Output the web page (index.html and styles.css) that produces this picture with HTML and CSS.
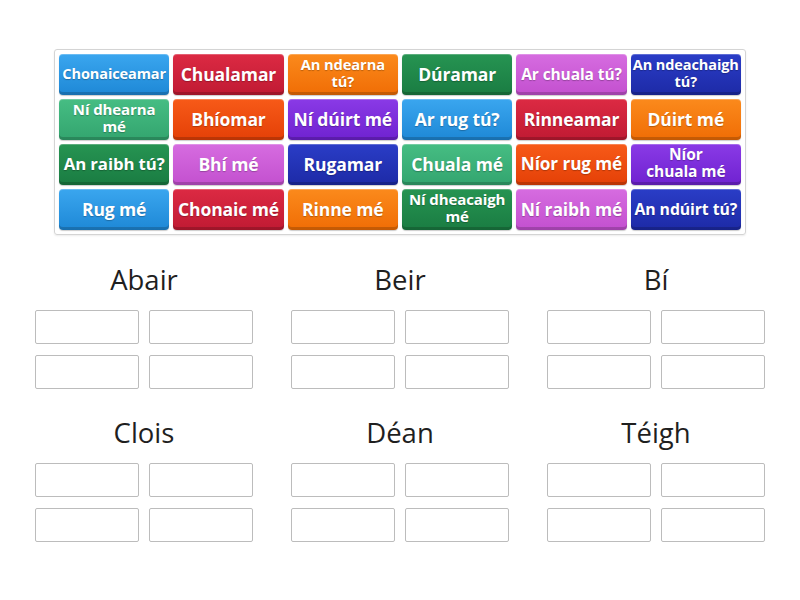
FILE: index.html
```html
<!DOCTYPE html>
<html lang="ga">
<head>
<meta charset="utf-8">
<title>Group sort</title>
<link rel="stylesheet" href="styles.css">
</head>
<body>
<div class="page">
  <div class="bank">
    <div class="tile blue fs-145">Chonaiceamar</div>
    <div class="tile red">Chualamar</div>
    <div class="tile orange fs-147 two">An ndearna<br>tú?</div>
    <div class="tile dgreen">Dúramar</div>
    <div class="tile pink fs-155">Ar chuala tú?</div>
    <div class="tile navy fs-145 two">An ndeachaigh<br>tú?</div>

    <div class="tile lgreen fs-15 two">Ní dhearna<br>mé</div>
    <div class="tile ored">Bhíomar</div>
    <div class="tile purple">Ní dúirt mé</div>
    <div class="tile blue">Ar rug tú?</div>
    <div class="tile red">Rinneamar</div>
    <div class="tile orange">Dúirt mé</div>

    <div class="tile dgreen fs-168">An raibh tú?</div>
    <div class="tile pink">Bhí mé</div>
    <div class="tile navy">Rugamar</div>
    <div class="tile lgreen">Chuala mé</div>
    <div class="tile ored fs-172">Níor rug mé</div>
    <div class="tile purple fs-155 two">Níor<br>chuala mé</div>

    <div class="tile blue">Rug mé</div>
    <div class="tile red">Chonaic mé</div>
    <div class="tile orange">Rinne mé</div>
    <div class="tile dgreen fs-15 two">Ní dheacaigh<br>mé</div>
    <div class="tile pink">Ní raibh mé</div>
    <div class="tile navy fs-158">An ndúirt tú?</div>
  </div>

  <div class="groups">
    <div class="group"><h2 class="title">Abair</h2><div class="slots"><div class="slot"></div><div class="slot"></div><div class="slot"></div><div class="slot"></div></div></div>
    <div class="group"><h2 class="title">Beir</h2><div class="slots"><div class="slot"></div><div class="slot"></div><div class="slot"></div><div class="slot"></div></div></div>
    <div class="group"><h2 class="title">Bí</h2><div class="slots"><div class="slot"></div><div class="slot"></div><div class="slot"></div><div class="slot"></div></div></div>
    <div class="group"><h2 class="title">Clois</h2><div class="slots"><div class="slot"></div><div class="slot"></div><div class="slot"></div><div class="slot"></div></div></div>
    <div class="group"><h2 class="title">Déan</h2><div class="slots"><div class="slot"></div><div class="slot"></div><div class="slot"></div><div class="slot"></div></div></div>
    <div class="group"><h2 class="title">Téigh</h2><div class="slots"><div class="slot"></div><div class="slot"></div><div class="slot"></div><div class="slot"></div></div></div>
  </div>
</div>
</body>
</html>
```

FILE: styles.css
```css
html, body {
  margin: 0;
  padding: 0;
  background: #ffffff;
}
body {
  font-family: "Open Sans", "Noto Sans", sans-serif;
  width: 800px;
  height: 600px;
  overflow: hidden;
}
.page {
  display: flex;
  flex-direction: column;
  align-items: center;
  padding-top: 49px;
}
.bank {
  box-sizing: border-box;
  width: 692px;
  padding: 4px;
  border: 1px solid #d4d4d4;
  border-radius: 3px;
  display: grid;
  grid-template-columns: repeat(6, 1fr);
  grid-auto-rows: 41px;
  gap: 4px 4px;
  box-shadow: 0 1px 2px rgba(0,0,0,0.08);
}
.tile {
  box-sizing: border-box;
  border-radius: 4px;
  color: #fff;
  font-weight: 700;
  font-size: 17.5px;
  line-height: 18px;
  text-align: center;
  display: flex;
  align-items: center;
  justify-content: center;
  padding: 0 2px 2px;
  white-space: nowrap;
  text-shadow: 0 1px 1px rgba(0,0,0,0.25);
  box-shadow: inset 0 -3px 0 rgba(0,0,0,0.18), inset 0 1px 0 rgba(255,255,255,0.25), 0 1px 1px rgba(0,0,0,0.2);
  letter-spacing: -0.1px;
}
.tile.two { line-height: 17px; padding-bottom: 3px; }
.fs-145 { font-size: 14.5px; }
.fs-147 { font-size: 14.7px; }
.fs-15  { font-size: 15px; }
.fs-155 { font-size: 15.5px; }
.fs-158 { font-size: 15.8px; }
.fs-168 { font-size: 16.8px; }
.fs-172 { font-size: 17.2px; }

.blue   { background: linear-gradient(#3aa6ef, #1e88d6); }
.red    { background: linear-gradient(#dc2a43, #c01a33); }
.orange { background: linear-gradient(#fb8a1c, #f06d05); }
.dgreen { background: linear-gradient(#269452, #1a7c42); }
.pink   { background: linear-gradient(#d66ce0, #c350cf); }
.navy   { background: linear-gradient(#2a3dc7, #1d2aa6); }
.lgreen { background: linear-gradient(#46bd83, #33a56f); }
.ored   { background: linear-gradient(#f75a18, #e44007); }
.purple { background: linear-gradient(#8a3ae6, #6f22d0); }

.groups {
  margin-top: 25px;
  display: grid;
  grid-template-columns: repeat(3, 218px);
  column-gap: 38px;
  row-gap: 24px;
}
.group {
  display: flex;
  flex-direction: column;
  align-items: center;
}
.title {
  margin: 0 0 10px;
  height: 40px;
  line-height: 40px;
  font-size: 27.5px;
  font-weight: 400;
  color: #1f1f1f;
}
.slots {
  display: grid;
  grid-template-columns: 104px 104px;
  grid-auto-rows: 34px;
  gap: 11px 10px;
  width: 218px;
  justify-content: space-between;
}
.slot {
  box-sizing: border-box;
  border: 1px solid #bcbcbc;
  border-radius: 2px;
  background: #fff;
}
```
